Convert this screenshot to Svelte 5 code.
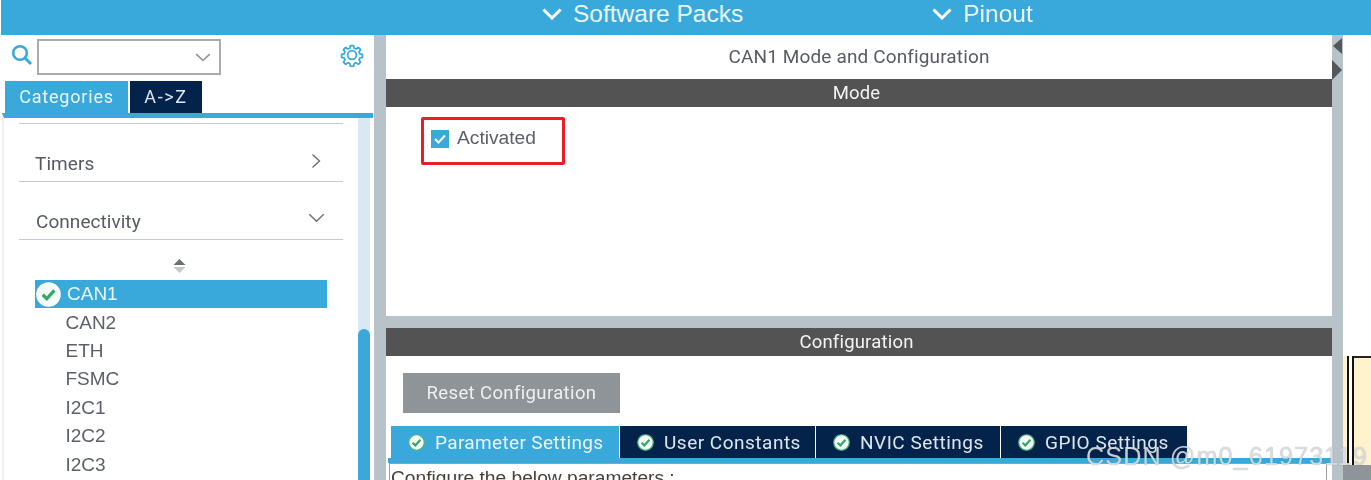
<script>
  const items = ['CAN2', 'ETH', 'FSMC', 'I2C1', 'I2C2', 'I2C3'];
  const tabs = [
    { label: 'Parameter Settings', cls: 'on t1' },
    { label: 'User Constants', cls: 't2' },
    { label: 'NVIC Settings', cls: 't3' },
    { label: 'GPIO Settings', cls: 't4' }
  ];
</script>

{#snippet chevron(w, h, color, sw, cls)}
  <svg class={cls} width={w} height={h} viewBox="0 0 20 12" preserveAspectRatio="none"><path d="M1.5 1.5 10 10l8.5-8.5" fill="none" stroke={color} stroke-width={sw} /></svg>
{/snippet}

{#snippet okIcon(cls, ring)}
  <svg class={cls} width="18" height="18" viewBox="0 0 18 18"><circle cx="9" cy="9" r="8.2" fill="#f6fbf8" stroke={ring} stroke-width="1.3" /><path d="M4.8 9.2 7.8 12l5.4-6" fill="none" stroke="#35a866" stroke-width="2.3" /></svg>
{/snippet}

<div class="page">
  <header class="top">
    <div class="menu m1">{@render chevron(20, 12, '#fff', 3, '')}<span>Software Packs</span></div>
    <div class="menu m2">{@render chevron(20, 12, '#fff', 3, '')}<span>Pinout</span></div>
  </header>

  <div class="body">
    <aside class="side">
      <div class="search">
        <svg class="glass" width="22" height="22" viewBox="0 0 22 22"><circle cx="9" cy="9" r="6.8" fill="none" stroke="#39a9dc" stroke-width="2.6" /><path d="m14 14 6 6" stroke="#39a9dc" stroke-width="3" /></svg>
        <div class="select">{@render chevron(16, 9, '#8f9499', 2, '')}</div>
        <svg class="gear" width="24" height="24" viewBox="0 0 24 24"><path d="M10.2 1.5h3.6l.6 3 2 .8 2.6-1.7 2.5 2.5-1.7 2.6.8 2 3 .6v3.4l-3 .6-.8 2 1.7 2.6-2.5 2.5-2.6-1.7-2 .8-.6 3h-3.6l-.6-3-2-.8-2.6 1.7-2.5-2.5 1.7-2.6-.8-2-3-.6v-3.4l3-.6.8-2-1.7-2.6 2.5-2.5 2.6 1.7 2-.8z" transform="translate(1.2 1.2) scale(.9)" fill="none" stroke="#39a9dc" stroke-width="1.9" stroke-linejoin="round" /><circle cx="12" cy="12" r="4.4" fill="none" stroke="#39a9dc" stroke-width="1.8" /></svg>
      </div>
      <div class="sidetabs">
        <div class="stab on">Categories</div>
        <div class="stab">A-&gt;Z</div>
      </div>
      <div class="listwrap">
        <div class="list">
          <div class="group first"></div>
          <div class="group timers"><span>Timers</span><svg width="10" height="16" viewBox="0 0 10 16"><path d="m1.5 1.5 7 6.5-7 6.5" fill="none" stroke="#6b6f73" stroke-width="1.4" /></svg></div>
          <div class="group conn"><span>Connectivity</span>{@render chevron(17, 10, '#6b6f73', 1.6, '')}</div>
          <svg class="sort" width="13" height="16" viewBox="0 0 13 16"><path d="M6.5 1 12.5 7H.5z" fill="#6d7073" /><path d="M.5 9h12l-6 6z" fill="#c4c7ca" /></svg>
          <div class="row sel">{@render okIcon('rowok', '#ffffff')}<span>CAN1</span></div>
          {#each items as it}
            <div class="row">{it}</div>
          {/each}
        </div>
        <div class="track"><div class="thumb"></div></div>
      </div>
    </aside>

    <div class="split"></div>

    <main class="main">
      <section class="modepane">
        <div class="title">CAN1 Mode and Configuration</div>
        <div class="bar">Mode</div>
        <div class="activated">
          <span class="check"><svg width="14" height="12" viewBox="0 0 14 12"><path d="m2 6 3.5 3.5L12 2.5" fill="none" stroke="#fff" stroke-width="2" /></svg></span>
          <span>Activated</span>
        </div>
      </section>
      <div class="hsplit"></div>
      <section class="configpane">
        <div class="bar cfg">Configuration</div>
        <div class="reset">Reset Configuration</div>
        <div class="tabs">
          {#each tabs as t}
            <div class="tab {t.cls}">{@render okIcon('tabok', '#4fb27f')}<span>{t.label}</span></div>
          {/each}
        </div>
        <div class="tabline"></div>
        <div class="params">Configure the below parameters :</div>
      </section>
    </main>

    <div class="split right">
      <i class="tri l"></i>
      <i class="tri r"></i>
    </div>

    <aside class="far">
      <div class="far-blank"></div>
      <div class="chip">
        <div class="c-left"></div>
        <div class="c-gap"></div>
        <div class="c-right"></div>
      </div>
      <div class="far-foot"></div>
    </aside>
  </div>
  <div class="mark">CSDN @m0_61973119</div>
</div>

<style>
  :global(body) { margin: 0; background: #fff; }
  .page { position: relative; width: 1371px; height: 480px; overflow: hidden; font-family: "Liberation Sans", Arial, sans-serif; color: #555a60; filter: blur(.35px); }
  .top { height: 35px; margin-left: 1px; background: #39a9dc; display: flex; color: #fff; }
  .menu { display: flex; align-items: center; gap: 11px; font-size: 24.5px; height: 27px; color: #eaf6fc; }
  .m1 { margin-left: 541px; }
  .m2 { margin-left: 189px; }
  .body { display: flex; height: 445px; }

  .side { width: 374px; flex: none; display: flex; flex-direction: column; }
  .search { height: 46px; display: flex; align-items: flex-start; padding: 3px 0 0 11px; box-sizing: border-box; }
  .glass { margin-top: 6px; }
  .select { height: 32px; margin: 1px 0 0 4px; border: 2px solid #a9acaf; display: flex; align-items: center; justify-content: flex-end; padding-right: 8px; width: 172px; }
  .select svg { margin-top: 1px; }
  .gear { margin: 5px 0 0 119px; }
  .sidetabs { display: flex; gap: 2px; height: 32px; margin-left: 5px; font-family: Roboto, sans-serif; }
  .stab { background: #03234b; color: #dfe6ee; width: 72px; font-size: 18px; line-height: 32px; text-align: center; letter-spacing: 1.6px; }
  .stab.on { background: #39a9dc; width: 123px; color: #eaf6fc; letter-spacing: .8px; }
  .listwrap { flex: 1; margin: 0 1px 0 2px; border-top: 5px solid #39a9dc; border-left: 2px solid #efefef; display: flex; min-height: 0; }
  .list { flex: 1; padding-left: 15px; padding-right: 14px; width: 339px; box-sizing: border-box; }
  .group { border-bottom: 1.5px solid #c5cbd1; display: flex; align-items: center; justify-content: space-between; font-family: Roboto, sans-serif; font-size: 19px; letter-spacing: .05px; color: #565b63; margin-right: 1px; }
  .group.first { height: 5px; }
  .group.timers { height: 58px; padding-right: 22px; align-items: flex-end; padding-bottom: 6px; box-sizing: border-box; }
  .group.timers span { margin-left: 16px; }
  .group.timers svg { margin-bottom: 6px; }
  .group.conn { height: 58px; padding-right: 18px; align-items: flex-end; padding-bottom: 6px; box-sizing: border-box; }
  .group.conn span { margin-left: 17px; }
  .group.conn svg { margin-bottom: 10px; }
  .sort { display: block; margin: 18px 0 0 154px; }
  .row { height: 28.45px; line-height: 28.45px; width: 292px; margin-left: 16px; padding-left: 30.5px; box-sizing: border-box; font-size: 19px; color: #5a5f68; }
  .row.sel { background: #39a9dc; color: #eaf6fc; height: 28px; margin-top: 6px; margin-bottom: .5px; display: flex; align-items: center; padding-left: 1px; gap: 6px; }
  .rowok { width: 25px; height: 25px; flex: none; }
  .track { width: 12px; flex: none; margin-right: 3px; background: #d9e8f5; display: flex; flex-direction: column; padding-top: 211px; box-sizing: border-box; }
  .thumb { flex: 1; background: #39a9dc; border-radius: 6px 6px 0 0; }

  .split { width: 12px; flex: none; background: #b7c2c9; }
  .split.right { width: 11px; position: relative; }
  .tri { position: absolute; display: block; width: 0; height: 0; border-style: solid; }
  .tri.l { left: 1px; top: 3px; border-width: 8px 9px 8px 0; border-color: transparent #55585b transparent transparent; }
  .tri.r { left: 0; top: 25px; border-width: 10px 0 10px 10px; border-color: transparent transparent transparent #55585b; }

  .main { width: 946px; flex: none; display: flex; flex-direction: column; background: #fff; }
  .modepane { height: 281px; flex: none; }
  .title { height: 44px; line-height: 44px; text-align: center; font-family: Roboto, sans-serif; font-size: 19px; letter-spacing: .13px; color: #565b63; box-sizing: border-box; }
  .bar { height: 28px; line-height: 28px; background: #525352; color: #f3f3f3; text-align: center; font-family: Roboto, sans-serif; font-size: 18.5px; letter-spacing: .2px; padding-right: 5px; box-sizing: border-box; }
  .activated { display: inline-flex; align-items: center; gap: 8px; margin: 10px 0 0 35px; width: 144px; height: 48px; box-sizing: border-box; border: 3px solid #ee1c25; border-radius: 2px; padding: 0 0 7px 7px; font-size: 19.2px; color: #5a5f68; }
  .check { width: 18px; height: 18px; background: #39a9dc; display: flex; align-items: center; justify-content: center; margin-top: 3px; }
  .hsplit { height: 12px; background: #b7c2c9; flex: none; }
  .configpane { flex: 1; min-height: 0; display: flex; flex-direction: column; }
  .reset { width: 217px; height: 40px; margin: 17px 0 13px 17px; background: #8f9499; color: #eef0f1; text-align: center; line-height: 40px; font-family: Roboto, sans-serif; font-size: 18.5px; letter-spacing: .37px; flex: none; }
  .tabs { display: flex; height: 32px; margin-left: 5px; flex: none; gap: 1px; font-family: Roboto, sans-serif; }
  .tab { background: #03234b; color: #dfe6ee; display: flex; align-items: center; font-size: 19px; letter-spacing: .5px; padding-left: 17px; box-sizing: border-box; gap: 10px; height: 32px; }
  .tab.on { background: #39a9dc; color: #eaf6fc; letter-spacing: .35px; }
  .t1 { width: 228px; }
  .t2 { width: 195px; }
  .t3 { width: 184px; }
  .t4 { width: 186px; }
  .tabok { flex: none; width: 17px; height: 17px; }
  .tabline { height: 5px; background: #39a9dc; margin-left: 2px; flex: none; }
  .params { flex: 1; min-height: 0; margin: 0 5px 0 3px; border: 1px solid #9b9ea1; border-bottom: 0; font-size: 19.2px; color: #4a4038; padding: 2px 0 0 1px; line-height: 23px; white-space: nowrap; overflow: hidden; }

  .far { flex: 1; display: flex; flex-direction: column; }
  .far-blank { height: 321px; flex: none; }
  .chip { flex: 1; display: flex; min-height: 0; }
  .c-left { width: 6px; background: #fff3cd; border-right: 2px solid #111; box-sizing: border-box; }
  .c-gap { width: 3px; }
  .c-right { flex: 1; background: #fff3cd; border-left: 2px solid #111; border-top: 2px solid #222; box-sizing: border-box; }
  .far-foot { height: 15px; background: #8f9499; flex: none; }
  .mark { position: absolute; left: 1086px; top: 442px; font-size: 25.2px; letter-spacing: 1.1px; color: rgba(225,228,232,.85); white-space: nowrap; text-shadow: 0 0 1px rgba(90,100,110,.55); }
</style>
